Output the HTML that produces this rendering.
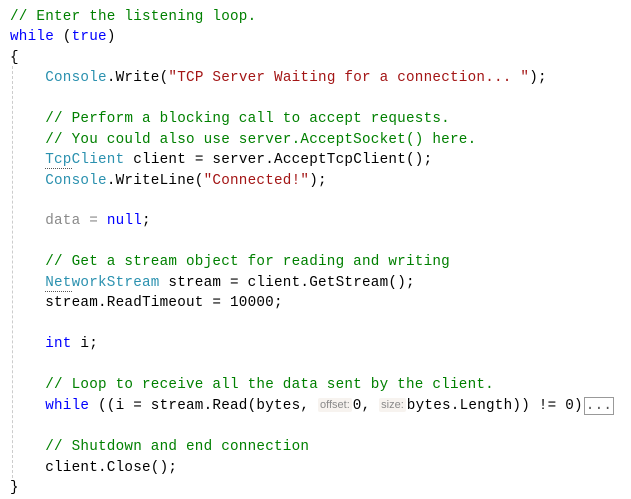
<html><head><style>
body{margin:0;background:#fff;width:631px;height:499px;overflow:hidden;position:relative}
pre{margin:0;position:absolute;left:10px;top:7px;font-family:"Liberation Mono",monospace;font-size:14.3px;letter-spacing:0.22px;line-height:20.43px;color:#000}
.c{color:#008000}.k{color:#0000ff}.t{color:#2b91af}.s{color:#a31515}.g{color:#8a8a8a}
.h{font-family:"Liberation Sans",sans-serif;font-size:11px;letter-spacing:0;color:#8a8a8a;background:#f7f3ef;padding:1px 2px;border-radius:2px;vertical-align:1px;margin-right:1px}
.d{border-bottom:1px dotted #555}
.b{border:1px solid #999;color:#555;padding:0 1px;margin-left:1px}
.guide{position:absolute;left:12px;top:66px;height:412px;border-left:1px dashed #ccc}
</style></head><body>
<div class="guide"></div>
<pre><span class="c">// Enter the listening loop.</span>
<span class="k">while</span> (<span class="k">true</span>)
{
    <span class="t">Console</span>.Write(<span class="s">"TCP Server Waiting for a connection... "</span>);

    <span class="c">// Perform a blocking call to accept requests.</span>
    <span class="c">// You could also use server.AcceptSocket() here.</span>
    <span class="t"><span class="d">Tcp</span>Client</span> client = server.AcceptTcpClient();
    <span class="t">Console</span>.WriteLine(<span class="s">"Connected!"</span>);

    <span class="g">data</span> <span class="g">=</span> <span class="k">null</span>;

    <span class="c">// Get a stream object for reading and writing</span>
    <span class="t"><span class="d">Net</span>workStream</span> stream = client.GetStream();
    stream.ReadTimeout = 10000;

    <span class="k">int</span> i;

    <span class="c">// Loop to receive all the data sent by the client.</span>
    <span class="k">while</span> ((i = stream.Read(bytes, <span class="h">offset:</span>0, <span class="h">size:</span>bytes.Length)) != 0)<span class="b">...</span>

    <span class="c">// Shutdown and end connection</span>
    client.Close();
}</pre>
</body></html>
